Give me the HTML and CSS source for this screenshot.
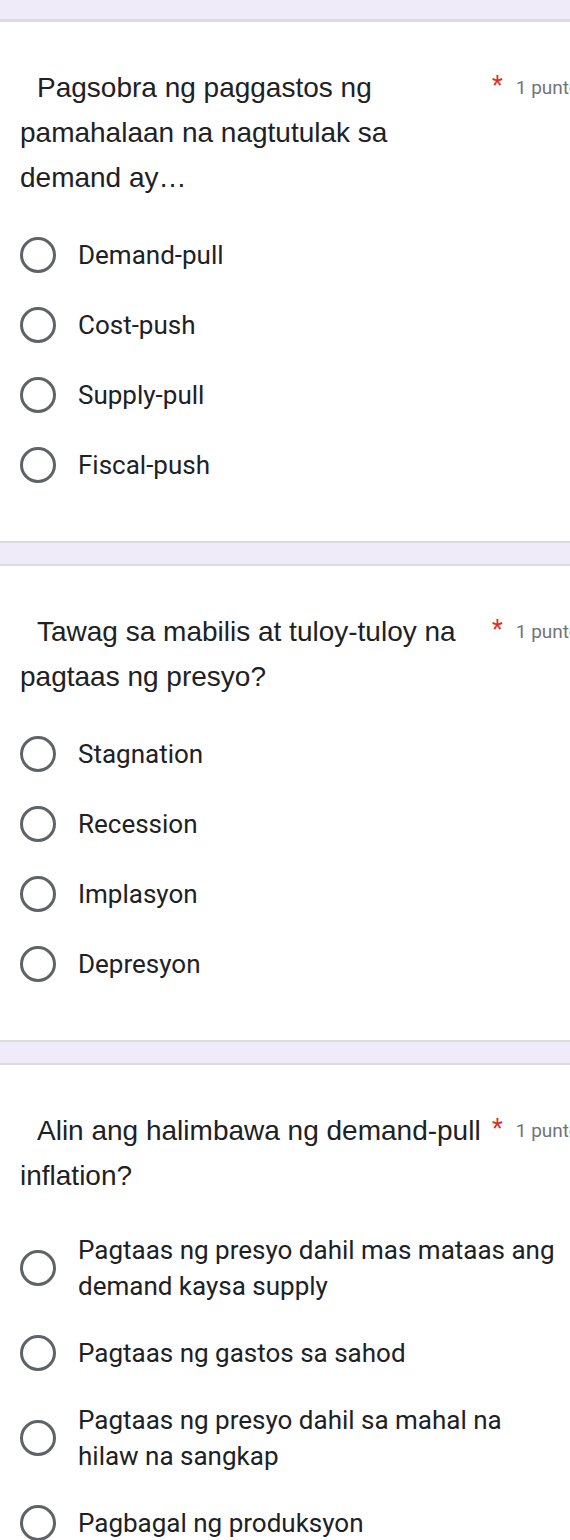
FILE: index.html
```html
<!DOCTYPE html>
<html lang="tl">
<head>
<meta charset="utf-8">
<title>Form</title>
<link rel="stylesheet" href="styles.css">
</head>
<body>
<div class="band band-top"></div>

<section class="card">
  <div class="q-head">
    <div class="q-title">Pagsobra ng paggastos ng pamahalaan na nagtutulak sa demand ay…</div>
    <div class="q-points"><span class="req">*</span>1 punto</div>
  </div>
  <ul class="options">
    <li class="option"><span class="radio"></span><span class="opt-text">Demand-pull</span></li>
    <li class="option"><span class="radio"></span><span class="opt-text">Cost-push</span></li>
    <li class="option"><span class="radio"></span><span class="opt-text">Supply-pull</span></li>
    <li class="option"><span class="radio"></span><span class="opt-text">Fiscal-push</span></li>
  </ul>
</section>

<div class="band"></div>

<section class="card">
  <div class="q-head">
    <div class="q-title">Tawag sa mabilis at tuloy-tuloy na pagtaas ng presyo?</div>
    <div class="q-points"><span class="req">*</span>1 punto</div>
  </div>
  <ul class="options">
    <li class="option"><span class="radio"></span><span class="opt-text">Stagnation</span></li>
    <li class="option"><span class="radio"></span><span class="opt-text">Recession</span></li>
    <li class="option"><span class="radio"></span><span class="opt-text">Implasyon</span></li>
    <li class="option"><span class="radio"></span><span class="opt-text">Depresyon</span></li>
  </ul>
</section>

<div class="band"></div>

<section class="card">
  <div class="q-head">
    <div class="q-title">Alin ang halimbawa ng demand-pull inflation?</div>
    <div class="q-points"><span class="req">*</span>1 punto</div>
  </div>
  <ul class="options">
    <li class="option"><span class="radio"></span><span class="opt-text">Pagtaas ng presyo dahil mas mataas ang demand kaysa supply</span></li>
    <li class="option"><span class="radio"></span><span class="opt-text">Pagtaas ng gastos sa sahod</span></li>
    <li class="option"><span class="radio"></span><span class="opt-text">Pagtaas ng presyo dahil sa mahal na hilaw na sangkap</span></li>
    <li class="option"><span class="radio"></span><span class="opt-text">Pagbagal ng produksyon</span></li>
  </ul>
</section>
</body>
</html>
```

FILE: styles.css
```css
html, body {
  margin: 0;
  padding: 0;
  background: #ffffff;
  overflow: hidden;
}

body {
  width: 570px;
  color: #202124;
  font-family: Roboto, "Liberation Sans", sans-serif;
}

.band {
  height: 21px;
  background: #f0ebf8;
  border-top: 2px solid #dadce0;
  border-bottom: 2px solid #dadce0;
}

.band-top {
  height: 19px;
  border-top: 0;
  border-bottom: 3px solid #dcdce0;
}

.card {
  padding: 43px 0 41px 20px;
}

.q-head {
  display: flex;
  align-items: flex-start;
  white-space: nowrap;
}

.q-title {
  flex: 0 0 auto;
  width: 464px;
  white-space: normal;
  font-family: "Liberation Sans", Arial, sans-serif;
  font-size: 28px;
  line-height: 45px;
  text-indent: 17px;
  color: #202124;
}

.q-points {
  flex: 0 0 auto;
  margin-left: 8px;
  font-size: 19px;
  line-height: 42px;
  color: #70757a;
}

.req {
  color: #d93025;
  font-size: 25px;
  margin-right: 13px;
}

.options {
  list-style: none;
  margin: 20px 0 0;
  padding: 0;
}

.option {
  display: flex;
  align-items: center;
  min-height: 42px;
  padding: 14px 0;
}

.radio {
  flex: 0 0 auto;
  width: 30px;
  height: 30px;
  border: 3px solid #5f6368;
  border-radius: 50%;
}

.opt-text {
  margin-left: 22px;
  padding-right: 8px;
  font-size: 26px;
  line-height: 36px;
  color: #202124;
}
```
